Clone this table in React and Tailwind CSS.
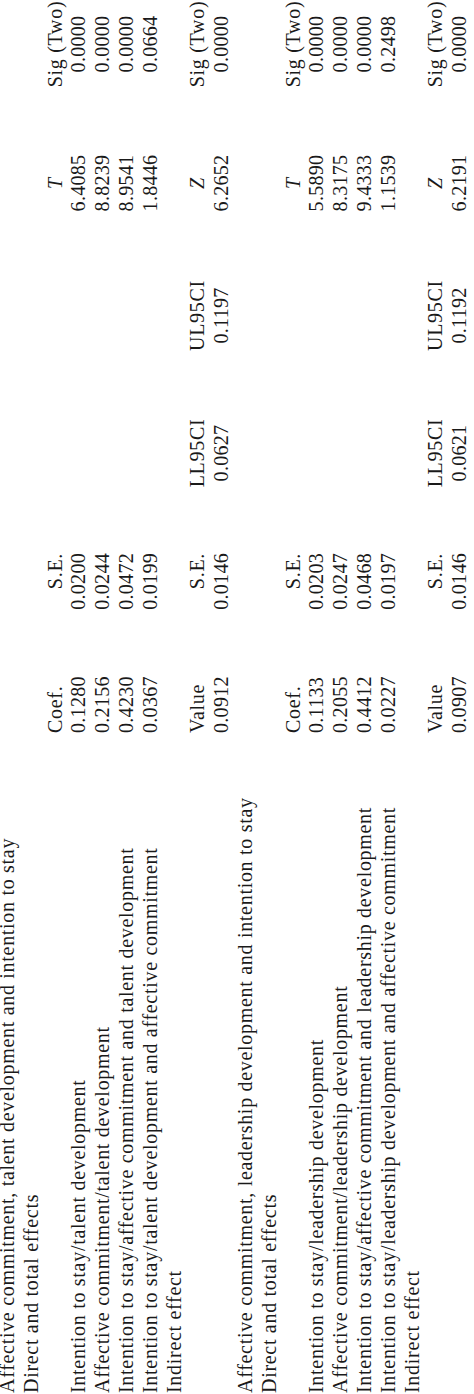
const sections = [
  {
    title: "Affective commitment, talent development and intention to stay",
    rows: [
      ["Intention to stay/talent development", "0.1280", "0.0200", "6.4085", "0.0000"],
      ["Affective commitment/talent development", "0.2156", "0.0244", "8.8239", "0.0000"],
      ["Intention to stay/affective commitment and talent development", "0.4230", "0.0472", "8.9541", "0.0000"],
      ["Intention to stay/talent development and affective commitment", "0.0367", "0.0199", "1.8446", "0.0664"],
    ],
    indirect: ["0.0912", "0.0146", "0.0627", "0.1197", "6.2652", "0.0000"],
  },
  {
    title: "Affective commitment, leadership development and intention to stay",
    rows: [
      ["Intention to stay/leadership development", "0.1133", "0.0203", "5.5890", "0.0000"],
      ["Affective commitment/leadership development", "0.2055", "0.0247", "8.3175", "0.0000"],
      ["Intention to stay/affective commitment and leadership development", "0.4412", "0.0468", "9.4333", "0.0000"],
      ["Intention to stay/leadership development and affective commitment", "0.0227", "0.0197", "1.1539", "0.2498"],
    ],
    indirect: ["0.0907", "0.0146", "0.0621", "0.1192", "6.2191", "0.0000"],
  },
];

// one line of the (unrotated) table
function Line({ label = "", coef = "", se = "", ll = "", ul = "", t = "", sig = "", head = false }) {
  const num = head ? "tracking-[0.7px]" : "tracking-[0.3px]";
  return (
    <div className="flex h-[23.8px] whitespace-nowrap">
      <div className="w-[661px] pl-[1px] tracking-[0.7px]">{label}</div>
      <div className={"w-[100px] text-left " + num}>{coef}</div>
      <div className={"w-[80px] text-right " + num}>{se}</div>
      <div className={"w-[200px] text-center " + num}>{ll}</div>
      <div className={"w-[75px] text-center " + num}>{ul}</div>
      <div className={"w-[190px] text-center " + num}>{t}</div>
      <div className={"w-[88px] text-center " + num}>{sig}</div>
    </div>
  );
}

function Section({ data }) {
  return (
    <>
      <Line label={data.title} />
      <Line label="Direct and total effects" />
      <Line head coef="Coef." se="S.E." t={<i>T</i>} sig="Sig (Two)" />
      {data.rows.map((r) => (
        <Line key={r[0]} label={r[0]} coef={r[1]} se={r[2]} t={r[3]} sig={r[4]} />
      ))}
      <Line label="Indirect effect" />
      <Line head coef="Value" se="S.E." ll="LL95CI" ul="UL95CI" t={<i>Z</i>} sig="Sig (Two)" />
      <Line
        coef={data.indirect[0]}
        se={data.indirect[1]}
        ll={data.indirect[2]}
        ul={data.indirect[3]}
        t={data.indirect[4]}
        sig={data.indirect[5]}
      />
    </>
  );
}

export default function App() {
  return (
    <div className="w-[474px] h-[1394px] overflow-hidden bg-white">
      {/* table is printed sideways, so rotate the whole sheet */}
      <div
        className="w-[1394px] h-[474px] origin-top-left -rotate-90 translate-x-[-4px] translate-y-[1394px] text-[20px] leading-[23.8px] text-[#1a1a1a]"
        style={{ fontFamily: '"Liberation Serif", "Times New Roman", serif' }}
      >
        <Section data={sections[0]} />
        <Section data={sections[1]} />
      </div>
    </div>
  );
}
